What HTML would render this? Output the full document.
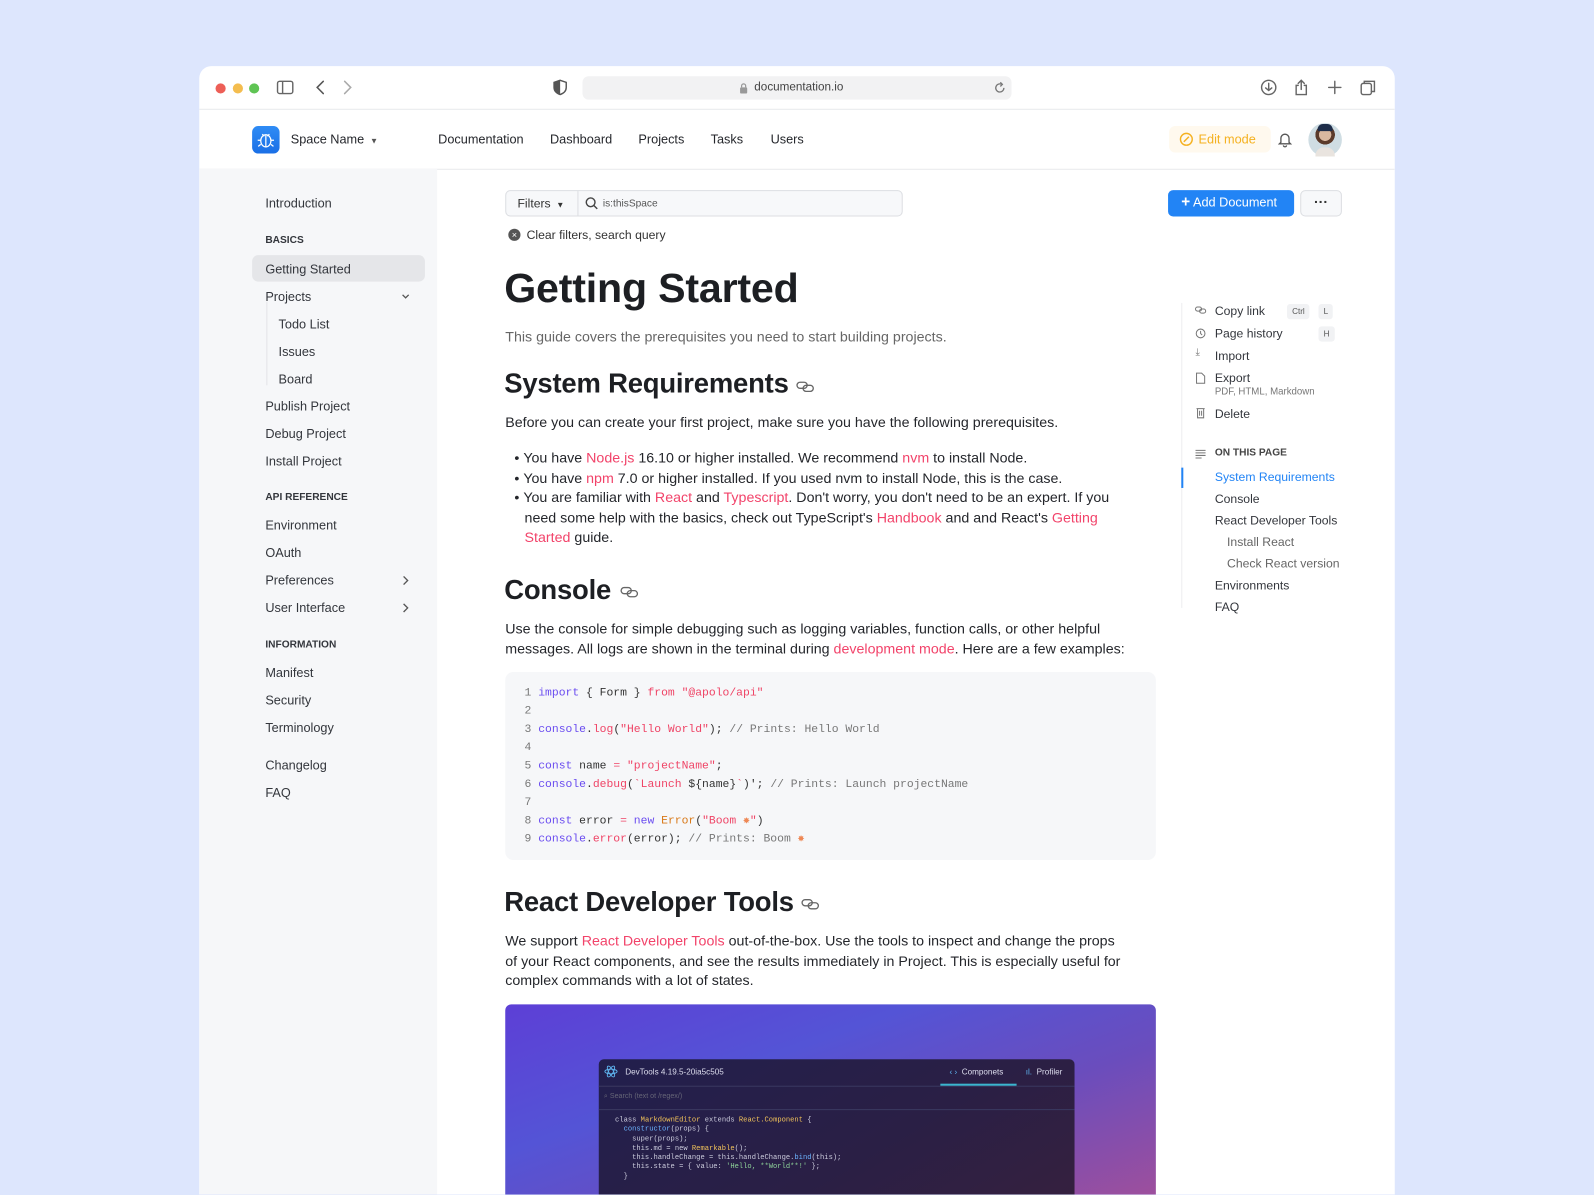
<!DOCTYPE html>
<html><head><meta charset="utf-8"><style>
*{box-sizing:border-box;margin:0;padding:0}
html,body{width:1594px;height:1195px;overflow:hidden;background:#dde6fd}
body{font-family:"Liberation Sans",sans-serif;color:#24262b}
#s{position:absolute;left:0;top:0;width:1568px;height:1175px;transform:scale(1.01659);transform-origin:0 0;overflow:hidden}
.a{position:absolute}
#win{left:196px;top:65px;width:1176px;height:1110px;background:#fff;border-radius:12px 12px 0 0;overflow:hidden}
.t{position:absolute;white-space:nowrap}
.side{left:0;top:101px;width:234px;height:1009px;background:#f6f7f9}
.sl{position:absolute;left:65px;font-size:12.5px;color:#33363c}
.sh{position:absolute;left:65px;font-size:10px;font-weight:bold;color:#33363c}
.p{font-size:14px;line-height:19.6px;color:#24262b}
.pk{color:#f2436a}
h2{position:absolute;font-size:27px;font-weight:bold;color:#1d1f23;letter-spacing:-.2px}
.code{font-family:"Liberation Mono",monospace;font-size:11.2px;line-height:18px;color:#333}
.n{color:#777}.k{color:#6a4cf0}.s{color:#ef4466}.c{color:#777}.o{color:#d97a1a}
.r{position:absolute;left:33px;font-size:12px;color:#33363c}
.kb{position:absolute;font-size:8px;background:#f1f2f4;color:#555;border-radius:3px;padding:3px 5px}
</style></head><body><div id="s">
<div id="win" class="a">
 <div class="a" style="left:16px;top:17px;width:10px;height:10px;border-radius:5px;background:#ed5f57"></div>
 <div class="a" style="left:33px;top:17px;width:10px;height:10px;border-radius:5px;background:#f4bd4f"></div>
 <div class="a" style="left:49px;top:17px;width:10px;height:10px;border-radius:5px;background:#5fc454"></div>
 <svg class="a" style="left:75px;top:13px" width="20" height="16" fill="none" stroke="#666" stroke-width="1.4"><rect x="2" y="2" width="15" height="12" rx="2"/><line x1="7" y1="2" x2="7" y2="14"/></svg>
 <svg class="a" style="left:112px;top:13px" width="40" height="16" fill="none" stroke-width="1.5" stroke-linecap="round"><path d="M10 2 L4 8 L10 14" stroke="#555"/><path d="M31 2 L37 8 L31 14" stroke="#aaa"/></svg>
 <svg class="a" style="left:348px;top:13px" width="14" height="16"><path d="M7 1 L13 3 V8 C13 12 10 14 7 15 C4 14 1 12 1 8 V3 Z" fill="none" stroke="#555" stroke-width="1.4"/><path d="M7 1 V15 C4 14 1 12 1 8 V3Z" fill="#555"/></svg>
 <div class="a" style="left:377px;top:10px;width:422px;height:23px;background:#f2f2f3;border-radius:6px"></div>
 <svg class="a" style="left:531px;top:16px" width="9" height="11"><rect x="1" y="5" width="7" height="6" rx="1" fill="#999"/><path d="M2.5 5 V3.5 A2 2 0 0 1 6.5 3.5 V5" fill="none" stroke="#999" stroke-width="1.2"/></svg>
 <div class="t" style="left:546px;top:15px;font-size:11.5px;color:#444">documentation.io</div>
 <svg class="a" style="left:781px;top:15px" width="13" height="13" fill="none" stroke="#777" stroke-width="1.3"><path d="M10.5 6.5 A4 4 0 1 1 8 2.8"/><path d="M7 1 L9 3 L7 5"/></svg>
 <svg class="a" style="left:1043px;top:12px" width="120" height="18" fill="none" stroke="#666" stroke-width="1.4" stroke-linecap="round"><circle cx="9" cy="9" r="7"/><path d="M9 5 V12 M6 9.5 L9 12 L12 9.5"/><path d="M38 7 H36 V16 H46 V7 H44 M41 11 V2 M38 5 L41 2 L44 5"/><path d="M74 3 V15 M68 9 H80"/><rect x="100" y="5" width="10" height="11" rx="2"/><path d="M103 5 V3 H113 V13 H110"/></svg>
 <div class="a" style="left:0;top:42px;width:1176px;height:1px;background:#e8e9ec"></div>
 <div class="a" style="left:52px;top:59px;width:27px;height:27px;border-radius:6px;background:linear-gradient(#2f8cf5,#1a6fe6)"></div>
 <svg class="a" style="left:56px;top:63px" width="19" height="19" fill="none" stroke="#fff" stroke-width="1.2"><ellipse cx="9.5" cy="10.5" rx="5" ry="6"/><path d="M6 4 L8 6 M13 4 L11 6 M9.5 5 V17 M4.5 10 H1.5 M14.5 10 H17.5 M4.5 14 L2 16 M14.5 14 L17 16"/></svg>
 <div class="t" style="left:90px;top:65px;font-size:12.5px;color:#24262b">Space Name <span style="font-size:8px;color:#555">&nbsp;▼</span></div>
 <div class="t" style="left:235px;top:65px;font-size:12.5px;color:#24262b">Documentation</div>
 <div class="t" style="left:345px;top:65px;font-size:12.5px">Dashboard</div>
 <div class="t" style="left:432px;top:65px;font-size:12.5px">Projects</div>
 <div class="t" style="left:503px;top:65px;font-size:12.5px">Tasks</div>
 <div class="t" style="left:562px;top:65px;font-size:12.5px">Users</div>
 <div class="a" style="left:954px;top:59px;width:100px;height:26px;background:#fff9ee;border-radius:6px"></div>
 <svg class="a" style="left:964px;top:65px" width="14" height="14" fill="none" stroke="#f5b120" stroke-width="1.4"><circle cx="7" cy="7" r="5.8"/><path d="M4.5 9.5 L9.5 4.5"/></svg>
 <div class="t" style="left:983px;top:65px;font-size:12.5px;color:#f5b120">Edit mode</div>
 <svg class="a" style="left:1061px;top:64px" width="14" height="16" fill="none" stroke="#555" stroke-width="1.3"><path d="M3 11 V7 A4 4 0 0 1 11 7 V11 L12.5 12.5 H1.5 Z M5.5 14 A1.5 1.5 0 0 0 8.5 14"/></svg>
 <div class="a" style="left:1091px;top:56px;width:33px;height:33px;border-radius:50%;background:radial-gradient(circle at 50% 35%,#d9b8a0 0 22%,#5c3b2b 23% 35%,#cfdde3 36%)"></div>
 <div class="a" style="left:1100px;top:57px;width:15px;height:7px;border-radius:7px 7px 2px 2px;background:#1e2d4a"></div>
 <div class="a" style="left:1098px;top:80px;width:19px;height:9px;border-radius:8px 8px 0 0;background:#e9e4df"></div>
 <div class="a" style="left:0;top:101px;width:1176px;height:1px;background:#e8e9ec"></div>
 <div class="a side">
  <div class="sl" style="top:27px">Introduction</div>
  <div class="sh" style="top:65px">BASICS</div>
  <div class="a" style="left:52px;top:85px;width:170px;height:26px;background:#e5e6e9;border-radius:6px"></div>
  <div class="sl" style="top:92px">Getting Started</div>
  <div class="sl" style="top:119px">Projects</div>
  <svg class="a" style="left:198px;top:122px" width="10" height="8" fill="none" stroke="#555" stroke-width="1.3"><path d="M2 2 L5 5 L8 2"/></svg>
  <div class="a" style="left:66px;top:131px;width:1px;height:82px;background:#e3e4e7"></div>
  <div class="sl" style="top:146px;left:78px">Todo List</div>
  <div class="sl" style="top:173px;left:78px">Issues</div>
  <div class="sl" style="top:200px;left:78px">Board</div>
  <div class="sl" style="top:227px">Publish Project</div>
  <div class="sl" style="top:254px">Debug Project</div>
  <div class="sl" style="top:281px">Install Project</div>
  <div class="sh" style="top:318px">API REFERENCE</div>
  <div class="sl" style="top:344px">Environment</div>
  <div class="sl" style="top:371px">OAuth</div>
  <div class="sl" style="top:398px">Preferences</div>
  <svg class="a" style="left:199px;top:399px" width="8" height="12" fill="none" stroke="#555" stroke-width="1.3"><path d="M2 2 L6 6 L2 10"/></svg>
  <div class="sl" style="top:425px">User Interface</div>
  <svg class="a" style="left:199px;top:426px" width="8" height="12" fill="none" stroke="#555" stroke-width="1.3"><path d="M2 2 L6 6 L2 10"/></svg>
  <div class="sh" style="top:463px">INFORMATION</div>
  <div class="sl" style="top:489px">Manifest</div>
  <div class="sl" style="top:516px">Security</div>
  <div class="sl" style="top:543px">Terminology</div>
  <div class="sl" style="top:580px">Changelog</div>
  <div class="sl" style="top:607px">FAQ</div>
 </div>
 <div class="a" style="left:301px;top:122px;width:391px;height:26px;border:1px solid #dcdee2;border-radius:5px;background:#f7f8fa"></div>
 <div class="a" style="left:372px;top:123px;width:1px;height:24px;background:#dcdee2"></div>
 <div class="t" style="left:313px;top:128px;font-size:12px;color:#333">Filters <span style="font-size:8px">&nbsp;▼</span></div>
 <svg class="a" style="left:379px;top:128px" width="14" height="14" fill="none" stroke="#444" stroke-width="1.4"><circle cx="6" cy="6" r="4.3"/><path d="M9.2 9.2 L12.5 12.5"/></svg>
 <div class="t" style="left:397px;top:130px;font-size:10px;color:#555">is:thisSpace</div>
 <div class="a" style="left:304px;top:160px;width:12px;height:12px;border-radius:6px;background:#555;color:#fff;font-size:9px;line-height:12px;text-align:center">×</div>
 <div class="t" style="left:322px;top:159px;font-size:12px;color:#333">Clear filters, search query</div>
 <div class="a" style="left:953px;top:122px;width:124px;height:26px;background:#2284f5;border-radius:5px"></div>
 <div class="t" style="left:966px;top:127px;font-size:12.5px;color:#fff"><b style="font-size:15px;line-height:12px">+</b> Add Document</div>
 <div class="a" style="left:1083px;top:122px;width:41px;height:26px;border:1px solid #dcdee2;border-radius:5px;background:#f7f8fa;text-align:center;font-size:14px;line-height:20px;font-weight:bold;color:#333">···</div>
 <div class="t" style="left:300px;top:195px;font-size:40.5px;font-weight:bold;color:#1d1f23;letter-spacing:-.2px">Getting Started</div>
 <div class="t" style="left:301px;top:258px;font-size:14px;color:#666">This guide covers the prerequisites you need to start building projects.</div>
 <h2 style="left:300px;top:297px">System Requirements</h2>
 <svg class="a" style="left:587px;top:309px" width="18" height="12" fill="none" stroke="#666" stroke-width="1.3"><rect x="1" y="2" width="10" height="6" rx="3"/><rect x="7" y="5" width="10" height="6" rx="3"/></svg>
 <div class="t p" style="left:301px;top:341px">Before you can create your first project, make sure you have the following prerequisites.</div>
 <div class="a p" style="left:310px;top:376px;width:600px">
  <div style="padding-left:10px;text-indent:-10px">•&nbsp;You have <span class="pk">Node.js</span> 16.10 or higher installed. We recommend <span class="pk">nvm</span> to install Node.</div>
  <div style="padding-left:10px;text-indent:-10px">•&nbsp;You have <span class="pk">npm</span> 7.0 or higher installed. If you used nvm to install Node, this is the case.</div>
  <div style="padding-left:10px;text-indent:-10px">•&nbsp;You are familiar with <span class="pk">React</span> and <span class="pk">Typescript</span>. Don't worry, you don't need to be an expert. If you need some help with the basics, check out TypeScript's <span class="pk">Handbook</span> and and React's <span class="pk">Getting Started</span> guide.</div>
 </div>
 <h2 style="left:300px;top:500px">Console</h2>
 <svg class="a" style="left:414px;top:511px" width="18" height="12" fill="none" stroke="#666" stroke-width="1.3"><rect x="1" y="2" width="10" height="6" rx="3"/><rect x="7" y="5" width="10" height="6" rx="3"/></svg>
 <div class="a p" style="left:301px;top:544px;width:615px">Use the console for simple debugging such as logging variables, function calls, or other helpful messages. All logs are shown in the terminal during <span class="pk">development mode</span>. Here are a few examples:</div>
 <div class="a" style="left:301px;top:596px;width:640px;height:185px;background:#f6f7f9;border-radius:8px"></div>
 <div class="a code" style="left:320px;top:608px;white-space:pre"><span class="n">1</span> <span class="k">import</span> { Form } <span class="s">from</span> <span class="s">"@apolo/api"</span>
<span class="n">2</span>
<span class="n">3</span> <span class="k">console</span>.<span class="s">log</span>(<span class="s">"Hello World"</span>); <span class="c">// Prints: Hello World</span>
<span class="n">4</span>
<span class="n">5</span> <span class="k">const</span> name <span class="s">=</span> <span class="s">"projectName"</span>;
<span class="n">6</span> <span class="k">console</span>.<span class="s">debug</span>(<span class="s">`Launch </span>${name}<span class="s">`</span>)'; <span class="c">// Prints: Launch projectName</span>
<span class="n">7</span>
<span class="n">8</span> <span class="k">const</span> error <span class="s">=</span> <span class="k">new</span> <span class="o">Error</span>(<span class="s">"Boom <span style="color:#e85">✸</span>"</span>)
<span class="n">9</span> <span class="k">console</span>.<span class="s">error</span>(error); <span class="c">// Prints: Boom <span style="color:#e85">✸</span></span></div>
 <h2 style="left:300px;top:807px">React Developer Tools</h2>
 <svg class="a" style="left:592px;top:818px" width="18" height="12" fill="none" stroke="#666" stroke-width="1.3"><rect x="1" y="2" width="10" height="6" rx="3"/><rect x="7" y="5" width="10" height="6" rx="3"/></svg>
 <div class="a p" style="left:301px;top:851px;width:612px">We support <span class="pk">React Developer Tools</span> out-of-the-box. Use the tools to inspect and change the props of your React components, and see the results immediately in Project. This is especially useful for complex commands with a lot of states.</div>
 <div class="a" style="left:301px;top:923px;width:640px;height:187px;border-radius:6px 6px 0 0;background:linear-gradient(160deg,#5d3fd6 0%,#5454d6 35%,#6a4dbd 65%,#b3508f 115%)"></div>
 <div class="a" style="left:393px;top:977px;width:468px;height:133px;border-radius:5px 5px 0 0;background:linear-gradient(150deg,#221f4d,#2a1f45 60%,#35203f)"></div>
 <div class="a" style="left:393px;top:1003px;width:468px;height:1px;background:#3a3860"></div>
 <div class="a" style="left:729px;top:1001px;width:75px;height:2px;background:#3bb5cf"></div>
 <div class="a" style="left:393px;top:1026px;width:468px;height:1px;background:#3a3860"></div>
 <svg class="a" style="left:398px;top:982px" width="14" height="14" fill="none" stroke="#5fb5f0" stroke-width=".9"><ellipse cx="7" cy="7" rx="6" ry="2.3"/><ellipse cx="7" cy="7" rx="6" ry="2.3" transform="rotate(60 7 7)"/><ellipse cx="7" cy="7" rx="6" ry="2.3" transform="rotate(-60 7 7)"/></svg>
 <div class="t" style="left:419px;top:985px;font-size:8px;color:#dde">DevTools 4.19.5-20ia5c505</div>
 <div class="t" style="left:738px;top:985px;font-size:8px;color:#dde"><span style="color:#5fb5f0">‹ ›</span>&nbsp;&nbsp;Componets</div>
 <div class="t" style="left:813px;top:985px;font-size:8px;color:#dde"><span style="color:#5fb5f0">ıl.</span>&nbsp;&nbsp;Profiler</div>
 <div class="t" style="left:398px;top:1010px;font-size:7px;color:#667">⌕ Search (text ot /regex/)</div>
 <div class="a" style="left:409px;top:1033px;font-family:'Liberation Mono',monospace;font-size:7px;line-height:9.3px;color:#ccd;white-space:pre">class <span style="color:#f2c35a">MarkdownEditor</span> extends <span style="color:#f2c35a">React.Component</span> {
  <span style="color:#6cb4ff">constructor</span>(props) {
    super(props);
    this.md = new <span style="color:#f2c35a">Remarkable</span>();
    this.handleChange = this.handleChange.<span style="color:#6cb4ff">bind</span>(this);
    this.state = { value: <span style="color:#8fd49a">'Hello, **World**!'</span> };
  }</div>
 <div class="a" style="left:966px;top:233px;width:1px;height:300px;background:#eceef0"></div>
 <div class="a" style="left:966px;top:395px;width:2px;height:20px;background:#2284f5"></div>
 <div class="a" style="left:975px;top:230px;width:150px;height:320px">
  <svg class="a" style="left:4px;top:5px" width="12" height="10" fill="none" stroke="#777" stroke-width="1"><rect x="1" y="2" width="6" height="4" rx="2"/><rect x="5" y="4" width="6" height="4" rx="2"/></svg>
  <div class="r" style="top:4px;left:24px">Copy link</div>
  <div class="kb" style="left:95px;top:4px">Ctrl</div><div class="kb" style="left:126px;top:4px">L</div>
  <svg class="a" style="left:4px;top:27px" width="12" height="12" fill="none" stroke="#777" stroke-width="1"><circle cx="6" cy="6" r="4.3"/><path d="M6 3.5 V6 L7.5 7.5"/></svg>
  <div class="r" style="top:26px;left:24px">Page history</div>
  <div class="kb" style="left:126px;top:26px">H</div>
  <div class="t" style="top:46px;left:5px;font-size:10px;color:#777">⤓</div>
  <div class="r" style="top:48px;left:24px">Import</div>
  <svg class="a" style="left:5px;top:71px" width="10" height="12" fill="none" stroke="#777" stroke-width="1"><path d="M1 1 H6 L9 4 V11 H1 Z"/></svg>
  <div class="r" style="top:70px;left:24px">Export</div>
  <div class="t" style="top:85px;left:24px;font-size:9.5px;color:#777">PDF, HTML, Markdown</div>
  <svg class="a" style="left:5px;top:105px" width="10" height="12" fill="none" stroke="#777" stroke-width="1"><path d="M1 2 H9 M2 2 V11 H8 V2 M4 4 V9 M6 4 V9"/></svg>
  <div class="r" style="top:105px;left:24px">Delete</div>
  <svg class="a" style="left:5px;top:147px" width="10" height="9" stroke="#777" stroke-width="1"><path d="M0 1 H10 M0 3.5 H10 M0 6 H10 M0 8.5 H6"/></svg>
  <div class="t" style="top:145px;left:24px;font-size:10px;font-weight:bold;color:#444">ON THIS PAGE</div>
  <div class="r" style="top:167px;left:24px;color:#2284f5">System Requirements</div>
  <div class="r" style="top:189px;left:24px">Console</div>
  <div class="r" style="top:210px;left:24px">React Developer Tools</div>
  <div class="r" style="top:231px;left:36px;color:#666">Install React</div>
  <div class="r" style="top:252px;left:36px;color:#666">Check React version</div>
  <div class="r" style="top:274px;left:24px">Environments</div>
  <div class="r" style="top:295px;left:24px">FAQ</div>
 </div>
</div>
</div></body></html>
